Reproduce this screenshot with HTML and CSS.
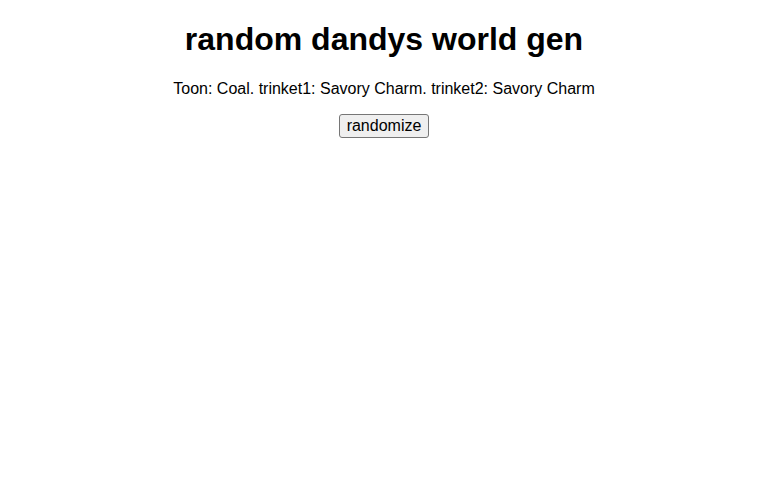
FILE: index.html
```html
<!DOCTYPE html>
<html>
<head>
<meta charset="utf-8">
<title>random dandys world gen</title>
<link rel="stylesheet" href="styles.css">
</head>
<body>
<main class="gen">
  <h1 class="gen-title">random dandys world gen</h1>
  <p class="gen-result">Toon: Coal. trinket1: Savory Charm. trinket2: Savory Charm</p>
  <button class="gen-button" type="button">randomize</button>
</main>
</body>
</html>
```
FILE: styles.css
```css
body {
  margin: 0;
  padding: 0 8px 8px;
  font-family: "Liberation Sans", Arial, sans-serif;
  color: #000;
  background: #fff;
}

.gen {
  display: flow-root;
  text-align: center;
}

.gen-title {
  font-size: 32px;
  font-weight: bold;
  margin: 21.44px 0;
}

.gen-result {
  font-size: 16px;
  margin: 16px 0;
}

.gen-button {
  box-sizing: border-box;
  font-family: "Liberation Sans", Arial, sans-serif;
  font-size: 16px;
  color: #000;
  background: #efefef;
  border: 1px solid #767676;
  border-radius: 3px;
  padding: 1px 7px;
  height: 24px;
  line-height: 18px;
}
```
